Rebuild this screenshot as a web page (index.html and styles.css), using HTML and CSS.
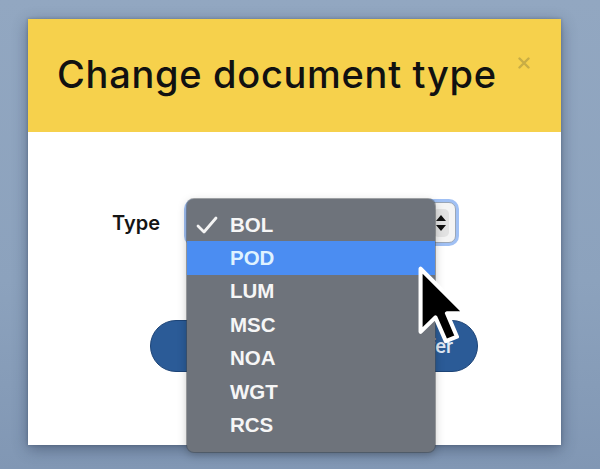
FILE: index.html
```html
<!DOCTYPE html>
<html>
<head>
<meta charset="utf-8">
<link rel="stylesheet" href="styles.css">
</head>
<body>
<div class="page">
  <div class="modal">
    <div class="modal-header">
      <h1 class="title">Change document type</h1>
      <svg class="close" width="12" height="12" viewBox="0 0 12 12"><path d="M1.5 1.5L10.5 10.5M10.5 1.5L1.5 10.5" stroke="#c8ad45" stroke-width="2.4" stroke-linecap="round"/></svg>
    </div>
    <div class="modal-body">
      <div class="form-row">
        <label class="label">Type</label>
        <div class="select">
          <span class="select-value">BOL</span>
          <span class="stepper">
            <svg width="12" height="20" viewBox="0 0 12 20"><path d="M6 2L11 8H1Z M6 18L11 12H1Z" fill="#111"/></svg>
          </span>
          <ul class="popup">
            <li class="item"><span class="check"><svg width="22" height="18" viewBox="0 0 22 18"><path d="M2 10L8 16L20 2" fill="none" stroke="#f4f4f4" stroke-width="2.8" stroke-linecap="round" stroke-linejoin="round"/></svg></span>BOL</li>
            <li class="item item-active"><span class="check"></span>POD</li>
            <li class="item"><span class="check"></span>LUM</li>
            <li class="item"><span class="check"></span>MSC</li>
            <li class="item"><span class="check"></span>NOA</li>
            <li class="item"><span class="check"></span>WGT</li>
            <li class="item"><span class="check"></span>RCS</li>
          </ul>
        </div>
      </div>
      <div class="actions">
        <button class="btn btn-left">Cancel</button>
        <button class="btn">Transfer</button>
      </div>
    </div>
  </div>
  <svg class="cursor" width="52" height="84" viewBox="-1 -1 14 22"><path d="M0.5 0.5L0.5 17.5L4.5 13.6L7.3 20L10.3 18.8L7.6 12.5L12.5 12.5Z" fill="#000" stroke="#fff" stroke-width="1.1" stroke-linejoin="round"/></svg>
</div>
</body>
</html>
```
FILE: styles.css
```css
* { box-sizing: border-box; }
html, body { margin: 0; padding: 0; }
body {
  width: 600px;
  height: 469px;
  overflow: hidden;
  background: linear-gradient(180deg, #92a7c1 0%, #8ca2bd 60%, #8197b4 100%);
  font-family: Inter, Roboto, "Liberation Sans", sans-serif;
}
.page {
  position: relative;
  padding: 19px 0 0 28px;
  height: 469px;
}
.modal {
  width: 533px;
  height: 426px;
  background: #ffffff;
  box-shadow: 0 4px 14px rgba(30, 45, 70, 0.45), 0 0 3px rgba(30, 45, 70, 0.3);
  display: flex;
  flex-direction: column;
}
.modal-header {
  height: 113px;
  background: #f6d14c;
  padding: 32px 31px 0 29px;
  display: flex;
  justify-content: space-between;
  align-items: flex-start;
}
.title {
  margin: 0;
  font-family: Inter, Roboto, sans-serif;
  font-weight: 500;
  font-size: 38px;
  letter-spacing: 0.7px;
  line-height: 46px;
  color: #111111;
}
.close { margin-top: 6px; }
.modal-body {
  flex: 1;
  display: flex;
  flex-direction: column;
  padding-top: 70px;
}
.form-row {
  display: flex;
  align-items: center;
  padding-left: 84px;
}
.label {
  width: 75px;
  font-family: Inter, Roboto, sans-serif;
  font-weight: 600;
  font-size: 20px;
  color: #151515;
}
.select {
  position: relative;
  width: 269px;
  height: 41px;
  border: 1px solid #9aa6b6;
  border-radius: 7px;
  background: #f4f4f4;
  box-shadow: 0 0 0 3px rgba(120, 165, 240, 0.7);
  display: flex;
  align-items: center;
  justify-content: space-between;
  padding: 0 6px 0 12px;
}
.select-value { font: 16px "Liberation Sans", sans-serif; color: #222; }
.stepper {
  width: 16px;
  height: 28px;
  border-radius: 5px;
  background: #e2e2e2;
  display: flex;
  align-items: center;
  justify-content: center;
}
.popup {
  position: absolute;
  left: -1px;
  top: -4px;
  width: 248px;
  margin: 0;
  padding: 9px 0 10px;
  list-style: none;
  background: #6e737b;
  border-radius: 7px;
  box-shadow: 0 3px 10px rgba(0, 0, 0, 0.25), 0 0 0 1px rgba(80, 85, 92, 0.5);
}
.item {
  display: flex;
  align-items: center;
  height: 33.4px;
  font-family: "Liberation Sans", Arial, sans-serif;
  font-weight: 700;
  font-size: 20.5px;
  color: #f6f6f6;
}
.item-active {
  background: #4b8df2;
  color: #dff2ff;
}
.check {
  width: 43px;
  display: flex;
  justify-content: flex-start;
  padding-left: 9px;
}
.actions {
  display: flex;
  justify-content: space-between;
  margin: 77px 0 0 122px;
  width: 328px;
}
.btn {
  height: 52px;
  padding: 0 24px;
  border-radius: 26px;
  border: 1.5px solid #1d4477;
  background: #2b5b97;
  color: #dfe8f4;
  font-family: Roboto, sans-serif;
  font-weight: 500;
  font-size: 20px;
}
.btn-left { padding: 0 40px 0 44px; }
.cursor {
  position: absolute;
  left: 415px;
  top: 262px;
}
```
